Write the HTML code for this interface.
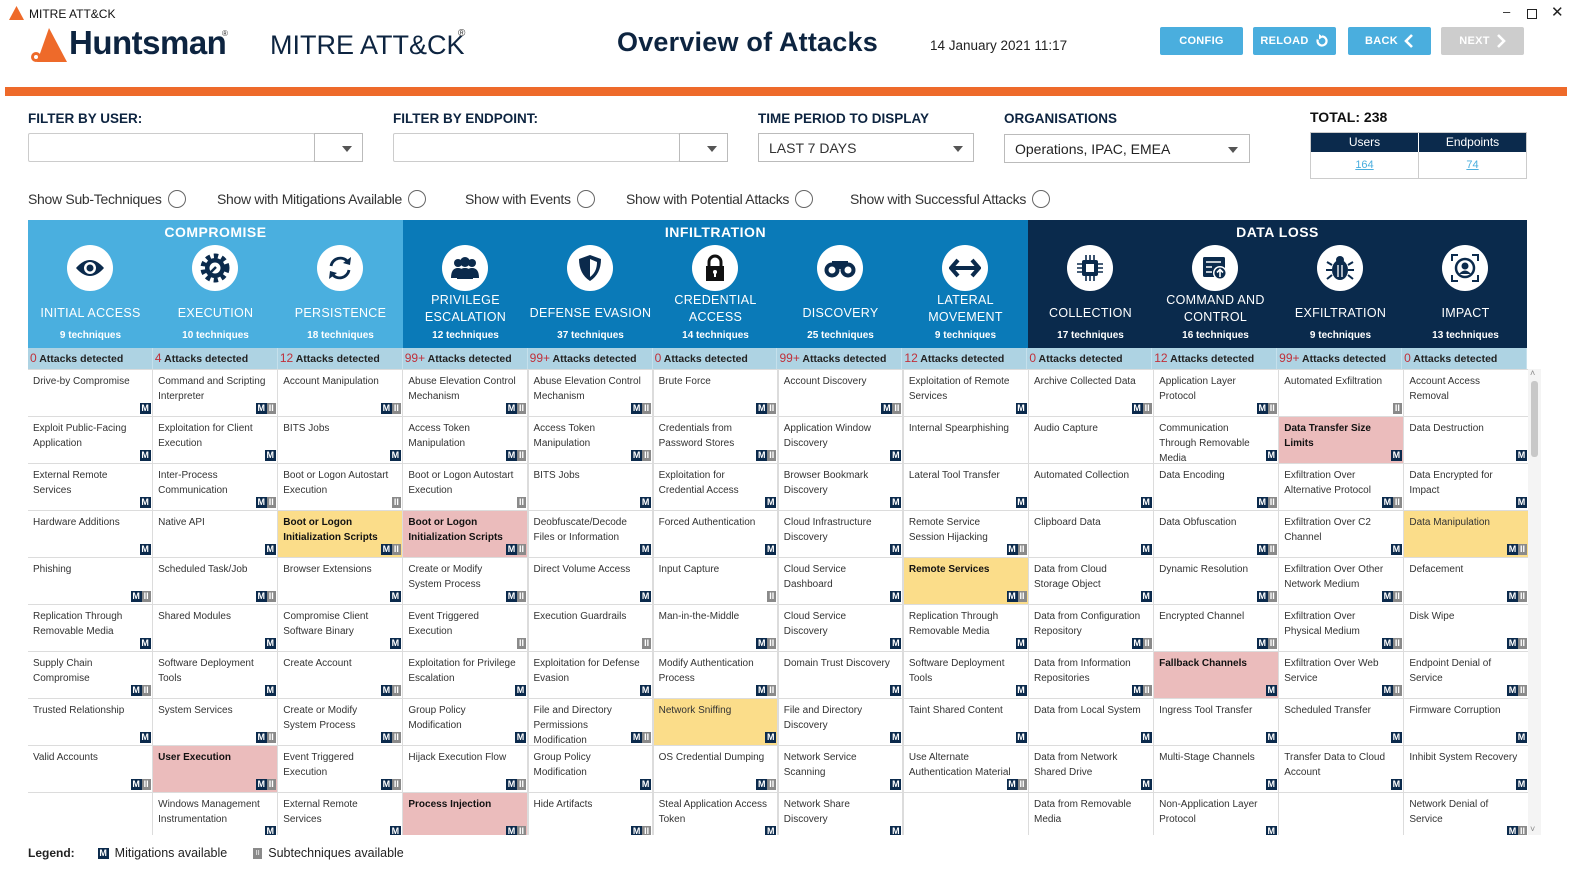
<!DOCTYPE html>
<html><head><meta charset="utf-8"><style>
*{box-sizing:border-box;margin:0;padding:0}
body{width:1590px;height:889px;background:#fff;font-family:"Liberation Sans",sans-serif;position:relative;overflow:hidden;color:#222}
.a{position:absolute}
.btn{position:absolute;top:27px;height:28px;width:83px;background:#4aaede;color:#fff;font-weight:bold;font-size:11px;border-radius:2px;display:flex;align-items:center;justify-content:center;gap:6px;letter-spacing:.3px}
.lbl{position:absolute;top:111px;font-weight:bold;font-size:13.5px;color:#0d2440}
.inp{position:absolute;top:133px;height:29px;border:1px solid #ccc;border-radius:2px}
.dd{position:absolute;top:133px;height:29px;border:1px solid #bbb}
.tri{position:absolute;width:0;height:0;border-left:5px solid transparent;border-right:5px solid transparent;border-top:6px solid #555}
.chk{position:absolute;top:190px;font-size:14px;color:#333;display:flex;align-items:center;gap:6px;letter-spacing:-.3px}
.chk i{display:inline-block;width:18px;height:18px;border:1.5px solid #666;border-radius:50%}
.grp{position:absolute;top:220px;height:128px;color:#fff;text-align:center}
.gt{position:absolute;top:4px;left:0;right:0;font-weight:bold;font-size:14px;letter-spacing:.5px}
.col{position:absolute;top:0;height:128px;width:125px}
.ic{position:absolute;left:39px;top:25px;width:46px;height:46px;border-radius:50%;background:#fff;display:flex;align-items:center;justify-content:center}
.nm{position:absolute;left:0;right:0;top:85px;font-size:12.5px;line-height:17px;letter-spacing:.3px}
.nm2{top:72px}
.tq{position:absolute;left:0;right:0;top:110px;font-size:10px;font-weight:bold}
.att{position:absolute;top:348px;left:28px;width:1499px;height:21px;background:#aed3e3;display:grid;grid-template-columns:repeat(12,1fr)}
.att div{font-size:10.5px;font-weight:bold;padding:3px 0 0 2px;border-right:1px solid #c5e0ec;white-space:nowrap}
.att span{color:#c0303a;font-weight:normal;font-size:12px}
.grid{position:absolute;top:369px;left:28px;width:1500px;height:466px;overflow:hidden;background:#dcdcdc;display:grid;grid-template-columns:repeat(12,1fr);grid-template-rows:repeat(10,45.5px);grid-auto-flow:column;gap:1.5px;padding-top:1px}
.c{background:#fff;position:relative;font-size:10px;line-height:15px;color:#333;padding:4px 10px 0 5px}
.y{background:#fbdd8a}.p{background:#ebbcbc}.b{font-weight:bold;color:#111}
.c u{position:absolute;right:1px;bottom:2px;display:flex;text-decoration:none}
.c u b,.lg b{display:inline-block;height:11px;font-size:9px;line-height:11px;color:#fff;text-align:center;font-weight:bold}
b.m{background:#0b2a4c;width:11px}b.s{background:#8a8a8a;width:9px;font-size:7px;font-weight:normal}
</style></head><body>
<svg class="a" style="left:9px;top:6px" width="15" height="14"><path d="M7.5 0 L15 14 L0 14Z" fill="#ee6a2a"/></svg>
<div class="a" style="left:29px;top:7px;font-size:12px;color:#111">MITRE ATT&amp;CK</div>
<div class="a" style="left:1503px;top:4px;font-size:13px;color:#222">&#8211;</div>
<div class="a" style="left:1527px;top:9px;width:10px;height:10px;border:1.5px solid #222"></div>
<div class="a" style="left:1551px;top:3px;font-size:15px;color:#222">&#10005;</div>
<svg class="a" style="left:31px;top:28px" width="36" height="34"><path d="M18 0 L36 34 L6 34Z" fill="#ee6a2a"/><circle cx="5" cy="29" r="5" fill="#ee6a2a"/><circle cx="5" cy="29" r="2" fill="#fff"/></svg>
<div class="a" style="left:69px;top:24px;font-size:33px;font-weight:bold;color:#0d2440;letter-spacing:-.5px">Huntsman</div>
<div class="a" style="left:222px;top:29px;font-size:8px;color:#333">®</div>
<div class="a" style="left:270px;top:30px;font-size:27px;color:#0d2440">MITRE ATT&amp;CK</div>
<div class="a" style="left:458px;top:28px;font-size:10px;color:#333">®</div>
<div class="a" style="left:617px;top:27px;font-size:27px;font-weight:bold;color:#0d2440;letter-spacing:.2px">Overview of Attacks</div>
<div class="a" style="left:930px;top:38px;font-size:13.5px;color:#222">14 January 2021 11:17</div>
<div class="btn" style="left:1160px">CONFIG</div>
<div class="btn" style="left:1253px">RELOAD <svg width="14" height="14" viewBox="0 0 14 14"><path d="M7 2.5A4.5 4.5 0 1 1 2.8 5.5" fill="none" stroke="#fff" stroke-width="2.2"/><path d="M4 0 L8 3 L4 5.5Z" fill="#fff"/></svg></div>
<div class="btn" style="left:1348px">BACK <svg width="10" height="14"><path d="M8 1 L2 7 L8 13" fill="none" stroke="#fff" stroke-width="2.6"/></svg></div>
<div class="btn" style="left:1441px;background:#cdcdcd">NEXT <svg width="10" height="14"><path d="M2 1 L8 7 L2 13" fill="none" stroke="#fff" stroke-width="2.6"/></svg></div>
<div class="a" style="left:5px;top:87px;width:1562px;height:9px;background:#ee6a2a"></div>
<div class="lbl" style="left:28px">FILTER BY USER:</div>
<div class="inp" style="left:28px;width:287px"></div><div class="dd" style="left:314px;width:49px"></div><div class="tri" style="left:342px;top:146px"></div>
<div class="lbl" style="left:393px">FILTER BY ENDPOINT:</div>
<div class="inp" style="left:393px;width:287px"></div><div class="dd" style="left:679px;width:49px"></div><div class="tri" style="left:707px;top:146px"></div>
<div class="lbl" style="left:758px">TIME PERIOD TO DISPLAY</div>
<div class="dd" style="left:758px;width:216px;font-size:14px;padding:6px 10px;color:#333">LAST 7 DAYS</div><div class="tri" style="left:953px;top:146px"></div>
<div class="lbl" style="left:1004px">ORGANISATIONS</div>
<div class="dd" style="left:1004px;top:134px;width:246px;font-size:14px;padding:6px 10px;color:#222">Operations, IPAC, EMEA</div><div class="tri" style="left:1228px;top:147px"></div>
<div class="a" style="left:1310px;top:109px;font-weight:bold;font-size:14px;color:#111">TOTAL: 238</div>
<div class="a" style="left:1310px;top:132px;width:217px;height:47px;border:1px solid #ccc">
<div style="display:flex;height:19px;background:#0b2a4c;color:#fff;font-size:12px"><div style="flex:1;text-align:center;line-height:19px;border-right:1px solid #fff">Users</div><div style="flex:1;text-align:center;line-height:19px">Endpoints</div></div>
<div style="display:flex;height:26px;color:#4aaede;font-size:11px;text-decoration:underline"><div style="flex:1;text-align:center;line-height:26px;border-right:1px solid #ccc">164</div><div style="flex:1;text-align:center;line-height:26px">74</div></div></div>
<div class="chk" style="left:28px">Show Sub-Techniques <i></i></div>
<div class="chk" style="left:217px">Show with Mitigations Available <i></i></div>
<div class="chk" style="left:465px">Show with Events <i></i></div>
<div class="chk" style="left:626px">Show with Potential Attacks <i></i></div>
<div class="chk" style="left:850px">Show with Successful Attacks <i></i></div>
<div class="grp" style="left:28px;width:375px;background:#4aafdf"><div class="gt">COMPROMISE</div>
<div class="col" style="left:0"><div class="ic"><svg width="30" height="20" viewBox="0 0 30 20"><path d="M1 10Q15 -6 29 10Q15 26 1 10Z" fill="#0b2a4c"/><circle cx="15" cy="10" r="6" fill="#fff"/><circle cx="15" cy="10" r="3.5" fill="#0b2a4c"/></svg></div><div class="nm">INITIAL ACCESS</div><div class="tq">9 techniques</div></div>
<div class="col" style="left:125px"><div class="ic"><svg width="32" height="32" viewBox="0 0 32 32"><circle cx="16" cy="16" r="11" fill="none" stroke="#0b2a4c" stroke-width="7" stroke-dasharray="4 3.2"/><circle cx="16" cy="16" r="10" fill="#0b2a4c"/><circle cx="16" cy="16" r="5.5" fill="#fff"/><path d="M12 20L17 15" stroke="#0b2a4c" stroke-width="2.5"/></svg></div><div class="nm">EXECUTION</div><div class="tq">10 techniques</div></div>
<div class="col" style="left:250px"><div class="ic"><svg width="30" height="30" viewBox="0 0 30 30"><path d="M6 13A9.5 9.5 0 0 1 23 9M24 17A9.5 9.5 0 0 1 7 21" fill="none" stroke="#0b2a4c" stroke-width="2.8"/><path d="M26 4L25 12L18 10Z M4 26L5 18L12 20Z" fill="#0b2a4c"/></svg></div><div class="nm">PERSISTENCE</div><div class="tq">18 techniques</div></div>
</div>
<div class="grp" style="left:403px;width:625px;background:#0a7ab8"><div class="gt">INFILTRATION</div>
<div class="col" style="left:0"><div class="ic"><svg width="30" height="24" viewBox="0 0 30 24"><circle cx="8" cy="7" r="4" fill="#0b2a4c"/><circle cx="22" cy="7" r="4" fill="#0b2a4c"/><circle cx="15" cy="6" r="5" fill="#0b2a4c"/><path d="M1 22Q1 12 8 12Q15 12 15 22ZM15 22Q15 12 22 12Q29 12 29 22ZM7 23Q7 12 15 12Q23 12 23 23Z" fill="#0b2a4c"/></svg></div><div class="nm nm2">PRIVILEGE<br>ESCALATION</div><div class="tq">12 techniques</div></div>
<div class="col" style="left:125px"><div class="ic"><svg width="24" height="28" viewBox="0 0 24 28"><path d="M12 1L23 5Q23 20 12 27Q1 20 1 5Z" fill="#0b2a4c"/><path d="M12 5L19 8Q19 18 12 23Z" fill="#fff"/></svg></div><div class="nm">DEFENSE EVASION</div><div class="tq">37 techniques</div></div>
<div class="col" style="left:250px"><div class="ic"><svg width="22" height="28" viewBox="0 0 22 28"><path d="M5 12V8A6 6 0 0 1 17 8V12" fill="none" stroke="#111" stroke-width="3"/><rect x="2" y="12" width="18" height="15" fill="#111"/><circle cx="11" cy="18" r="2" fill="#fff"/><rect x="10" y="18" width="2" height="5" fill="#fff"/></svg></div><div class="nm nm2">CREDENTIAL<br>ACCESS</div><div class="tq">14 techniques</div></div>
<div class="col" style="left:375px"><div class="ic"><svg width="32" height="20" viewBox="0 0 32 20"><circle cx="8" cy="12" r="7.5" fill="#0b2a4c"/><circle cx="24" cy="12" r="7.5" fill="#0b2a4c"/><rect x="8" y="3" width="16" height="8" fill="#0b2a4c"/><circle cx="8" cy="12" r="3.5" fill="#fff"/><circle cx="24" cy="12" r="3.5" fill="#fff"/></svg></div><div class="nm">DISCOVERY</div><div class="tq">25 techniques</div></div>
<div class="col" style="left:500px"><div class="ic"><svg width="32" height="20" viewBox="0 0 32 20"><path d="M9 2L2 10L9 18M23 2L30 10L23 18M3 10H29" fill="none" stroke="#0b2a4c" stroke-width="4"/></svg></div><div class="nm nm2">LATERAL<br>MOVEMENT</div><div class="tq">9 techniques</div></div>
</div>
<div class="grp" style="left:1028px;width:499px;background:#0a2a4c"><div class="gt">DATA LOSS</div>
<div class="col" style="left:0"><div class="ic"><svg width="30" height="30" viewBox="0 0 30 30"><rect x="7" y="7" width="16" height="16" rx="2" fill="#0b2a4c"/><rect x="11" y="11" width="8" height="8" fill="#fff"/><path d="M11 2V7M15 2V7M19 2V7M11 23V28M15 23V28M19 23V28M2 11H7M2 15H7M2 19H7M23 11H28M23 15H28M23 19H28" stroke="#0b2a4c" stroke-width="1.6"/></svg></div><div class="nm">COLLECTION</div><div class="tq">17 techniques</div></div>
<div class="col" style="left:125px"><div class="ic"><svg width="30" height="30" viewBox="0 0 30 30"><rect x="3" y="4" width="22" height="20" rx="1.5" fill="#0b2a4c"/><path d="M6 9H21M6 14H12M6 19H12" stroke="#fff" stroke-width="1.6"/><circle cx="20" cy="20" r="7" fill="#fff"/><circle cx="20" cy="20" r="5.5" fill="#0b2a4c"/><path d="M20 24V17M17 19.5L20 16.5L23 19.5" stroke="#fff" stroke-width="1.6" fill="none"/></svg></div><div class="nm nm2">COMMAND AND<br>CONTROL</div><div class="tq">16 techniques</div></div>
<div class="col" style="left:250px"><div class="ic"><svg width="30" height="30" viewBox="0 0 30 30"><ellipse cx="15" cy="17" rx="8" ry="10" fill="#0b2a4c"/><circle cx="15" cy="7" r="4" fill="#0b2a4c"/><path d="M7 12L2 9M7 17H1M7 22L2 26M23 12L28 9M23 17H29M23 22L28 26" stroke="#0b2a4c" stroke-width="2"/><path d="M13 12V24M17 12V24" stroke="#fff" stroke-width="1.3"/></svg></div><div class="nm">EXFILTRATION</div><div class="tq">9 techniques</div></div>
<div class="col" style="left:375px"><div class="ic"><svg width="32" height="32" viewBox="0 0 32 32"><circle cx="16" cy="16" r="9" fill="none" stroke="#0b2a4c" stroke-width="2.5"/><circle cx="16" cy="14" r="3.5" fill="#0b2a4c"/><path d="M10 22Q16 15 22 22" fill="#0b2a4c"/><path d="M3 9V3H9M23 3H29V9M3 23V29H9M23 29H29V23" fill="none" stroke="#0b2a4c" stroke-width="2"/></svg></div><div class="nm">IMPACT</div><div class="tq">13 techniques</div></div>
</div>
<div class="att">
<div><span>0</span> Attacks detected</div><div><span>4</span> Attacks detected</div><div><span>12</span> Attacks detected</div><div><span>99+</span> Attacks detected</div><div><span>99+</span> Attacks detected</div><div><span>0</span> Attacks detected</div><div><span>99+</span> Attacks detected</div><div><span>12</span> Attacks detected</div><div><span>0</span> Attacks detected</div><div><span>12</span> Attacks detected</div><div><span>99+</span> Attacks detected</div><div><span>0</span> Attacks detected</div>
</div>
<div class="grid">
<div class="c">Drive-by Compromise<u><b class="m">M</b></u></div>
<div class="c">Exploit Public-Facing Application<u><b class="m">M</b></u></div>
<div class="c">External Remote Services<u><b class="m">M</b></u></div>
<div class="c">Hardware Additions<u><b class="m">M</b></u></div>
<div class="c">Phishing<u><b class="m">M</b><b class="s">II</b></u></div>
<div class="c">Replication Through Removable Media<u><b class="m">M</b></u></div>
<div class="c">Supply Chain Compromise<u><b class="m">M</b><b class="s">II</b></u></div>
<div class="c">Trusted Relationship<u><b class="m">M</b></u></div>
<div class="c">Valid Accounts<u><b class="m">M</b><b class="s">II</b></u></div>
<div class="c"></div>

<div class="c">Command and Scripting Interpreter<u><b class="m">M</b><b class="s">II</b></u></div>
<div class="c">Exploitation for Client Execution<u><b class="m">M</b></u></div>
<div class="c">Inter-Process Communication<u><b class="m">M</b><b class="s">II</b></u></div>
<div class="c">Native API<u><b class="m">M</b></u></div>
<div class="c">Scheduled Task/Job<u><b class="m">M</b><b class="s">II</b></u></div>
<div class="c">Shared Modules<u><b class="m">M</b></u></div>
<div class="c">Software Deployment Tools<u><b class="m">M</b></u></div>
<div class="c">System Services<u><b class="m">M</b><b class="s">II</b></u></div>
<div class="c p b">User Execution<u><b class="m">M</b><b class="s">II</b></u></div>
<div class="c">Windows Management Instrumentation<u><b class="m">M</b></u></div>

<div class="c">Account Manipulation<u><b class="m">M</b><b class="s">II</b></u></div>
<div class="c">BITS Jobs<u><b class="m">M</b></u></div>
<div class="c">Boot or Logon Autostart Execution<u><b class="s">II</b></u></div>
<div class="c y b">Boot or Logon Initialization Scripts<u><b class="m">M</b><b class="s">II</b></u></div>
<div class="c">Browser Extensions<u><b class="m">M</b></u></div>
<div class="c">Compromise Client Software Binary<u><b class="m">M</b></u></div>
<div class="c">Create Account<u><b class="m">M</b><b class="s">II</b></u></div>
<div class="c">Create or Modify System Process<u><b class="m">M</b><b class="s">II</b></u></div>
<div class="c">Event Triggered Execution<u><b class="m">M</b><b class="s">II</b></u></div>
<div class="c">External Remote Services<u><b class="m">M</b></u></div>

<div class="c">Abuse Elevation Control Mechanism<u><b class="m">M</b><b class="s">II</b></u></div>
<div class="c">Access Token Manipulation<u><b class="m">M</b><b class="s">II</b></u></div>
<div class="c">Boot or Logon Autostart Execution<u><b class="s">II</b></u></div>
<div class="c p b">Boot or Logon Initialization Scripts<u><b class="m">M</b><b class="s">II</b></u></div>
<div class="c">Create or Modify System Process<u><b class="m">M</b><b class="s">II</b></u></div>
<div class="c">Event Triggered Execution<u><b class="s">II</b></u></div>
<div class="c">Exploitation for Privilege Escalation<u><b class="m">M</b></u></div>
<div class="c">Group Policy Modification<u><b class="m">M</b></u></div>
<div class="c">Hijack Execution Flow<u><b class="m">M</b><b class="s">II</b></u></div>
<div class="c p b">Process Injection<u><b class="m">M</b><b class="s">II</b></u></div>

<div class="c">Abuse Elevation Control Mechanism<u><b class="m">M</b><b class="s">II</b></u></div>
<div class="c">Access Token Manipulation<u><b class="m">M</b><b class="s">II</b></u></div>
<div class="c">BITS Jobs<u><b class="m">M</b></u></div>
<div class="c">Deobfuscate/Decode Files or Information<u><b class="m">M</b></u></div>
<div class="c">Direct Volume Access<u><b class="m">M</b></u></div>
<div class="c">Execution Guardrails<u><b class="s">II</b></u></div>
<div class="c">Exploitation for Defense Evasion<u><b class="m">M</b></u></div>
<div class="c">File and Directory Permissions Modification<u><b class="m">M</b><b class="s">II</b></u></div>
<div class="c">Group Policy Modification<u><b class="m">M</b></u></div>
<div class="c">Hide Artifacts<u><b class="m">M</b><b class="s">II</b></u></div>

<div class="c">Brute Force<u><b class="m">M</b><b class="s">II</b></u></div>
<div class="c">Credentials from Password Stores<u><b class="m">M</b><b class="s">II</b></u></div>
<div class="c">Exploitation for Credential Access<u><b class="m">M</b></u></div>
<div class="c">Forced Authentication<u><b class="m">M</b></u></div>
<div class="c">Input Capture<u><b class="s">II</b></u></div>
<div class="c">Man-in-the-Middle<u><b class="m">M</b><b class="s">II</b></u></div>
<div class="c">Modify Authentication Process<u><b class="m">M</b><b class="s">II</b></u></div>
<div class="c y">Network Sniffing<u><b class="m">M</b></u></div>
<div class="c">OS Credential Dumping<u><b class="m">M</b><b class="s">II</b></u></div>
<div class="c">Steal Application Access Token<u><b class="m">M</b></u></div>

<div class="c">Account Discovery<u><b class="m">M</b><b class="s">II</b></u></div>
<div class="c">Application Window Discovery<u><b class="m">M</b></u></div>
<div class="c">Browser Bookmark Discovery<u><b class="m">M</b></u></div>
<div class="c">Cloud Infrastructure Discovery<u><b class="m">M</b></u></div>
<div class="c">Cloud Service Dashboard<u><b class="m">M</b></u></div>
<div class="c">Cloud Service Discovery<u><b class="m">M</b></u></div>
<div class="c">Domain Trust Discovery<u><b class="m">M</b></u></div>
<div class="c">File and Directory Discovery<u><b class="m">M</b></u></div>
<div class="c">Network Service Scanning<u><b class="m">M</b></u></div>
<div class="c">Network Share Discovery<u><b class="m">M</b></u></div>

<div class="c">Exploitation of Remote Services<u><b class="m">M</b></u></div>
<div class="c">Internal Spearphishing</div>
<div class="c">Lateral Tool Transfer<u><b class="m">M</b></u></div>
<div class="c">Remote Service Session Hijacking<u><b class="m">M</b><b class="s">II</b></u></div>
<div class="c y b">Remote Services<u><b class="m">M</b><b class="s">II</b></u></div>
<div class="c">Replication Through Removable Media<u><b class="m">M</b></u></div>
<div class="c">Software Deployment Tools<u><b class="m">M</b></u></div>
<div class="c">Taint Shared Content<u><b class="m">M</b></u></div>
<div class="c">Use Alternate Authentication Material<u><b class="m">M</b><b class="s">II</b></u></div>
<div class="c"></div>

<div class="c">Archive Collected Data<u><b class="m">M</b><b class="s">II</b></u></div>
<div class="c">Audio Capture</div>
<div class="c">Automated Collection<u><b class="m">M</b></u></div>
<div class="c">Clipboard Data<u><b class="m">M</b></u></div>
<div class="c">Data from Cloud Storage Object<u><b class="m">M</b></u></div>
<div class="c">Data from Configuration Repository<u><b class="m">M</b><b class="s">II</b></u></div>
<div class="c">Data from Information Repositories<u><b class="m">M</b><b class="s">II</b></u></div>
<div class="c">Data from Local System<u><b class="m">M</b></u></div>
<div class="c">Data from Network Shared Drive<u><b class="m">M</b></u></div>
<div class="c">Data from Removable Media</div>

<div class="c">Application Layer Protocol<u><b class="m">M</b><b class="s">II</b></u></div>
<div class="c">Communication Through Removable Media<u><b class="m">M</b></u></div>
<div class="c">Data Encoding<u><b class="m">M</b><b class="s">II</b></u></div>
<div class="c">Data Obfuscation<u><b class="m">M</b><b class="s">II</b></u></div>
<div class="c">Dynamic Resolution<u><b class="m">M</b><b class="s">II</b></u></div>
<div class="c">Encrypted Channel<u><b class="m">M</b><b class="s">II</b></u></div>
<div class="c p b">Fallback Channels<u><b class="m">M</b></u></div>
<div class="c">Ingress Tool Transfer<u><b class="m">M</b></u></div>
<div class="c">Multi-Stage Channels<u><b class="m">M</b></u></div>
<div class="c">Non-Application Layer Protocol<u><b class="m">M</b></u></div>

<div class="c">Automated Exfiltration<u><b class="s">II</b></u></div>
<div class="c p b">Data Transfer Size Limits<u><b class="m">M</b></u></div>
<div class="c">Exfiltration Over Alternative Protocol<u><b class="m">M</b><b class="s">II</b></u></div>
<div class="c">Exfiltration Over C2 Channel<u><b class="m">M</b></u></div>
<div class="c">Exfiltration Over Other Network Medium<u><b class="m">M</b><b class="s">II</b></u></div>
<div class="c">Exfiltration Over Physical Medium<u><b class="m">M</b><b class="s">II</b></u></div>
<div class="c">Exfiltration Over Web Service<u><b class="m">M</b><b class="s">II</b></u></div>
<div class="c">Scheduled Transfer<u><b class="m">M</b></u></div>
<div class="c">Transfer Data to Cloud Account<u><b class="m">M</b></u></div>
<div class="c"></div>

<div class="c">Account Access Removal</div>
<div class="c">Data Destruction<u><b class="m">M</b></u></div>
<div class="c">Data Encrypted for Impact<u><b class="m">M</b></u></div>
<div class="c y">Data Manipulation<u><b class="m">M</b><b class="s">II</b></u></div>
<div class="c">Defacement<u><b class="m">M</b><b class="s">II</b></u></div>
<div class="c">Disk Wipe<u><b class="m">M</b><b class="s">II</b></u></div>
<div class="c">Endpoint Denial of Service<u><b class="m">M</b><b class="s">II</b></u></div>
<div class="c">Firmware Corruption<u><b class="m">M</b></u></div>
<div class="c">Inhibit System Recovery<u><b class="m">M</b></u></div>
<div class="c">Network Denial of Service<u><b class="m">M</b><b class="s">II</b></u></div>
</div>
<div class="a" style="left:1528px;top:369px;width:13px;height:466px;background:#f4f4f4"></div>
<div class="a" style="left:1531px;top:381px;width:7px;height:76px;background:#c8c8c8;border-radius:3px"></div>
<div class="a" style="left:1530px;top:368px;font-size:9px;color:#888">&#708;</div>
<div class="a" style="left:1530px;top:824px;font-size:9px;color:#888">&#709;</div>
<div class="a lg" style="left:28px;top:846px;font-size:12.5px;color:#222;display:flex;align-items:center"><span style="font-weight:bold;font-size:12px;margin-right:23px">Legend:</span><b class="m" style="margin-right:6px">M</b>Mitigations available<b class="s" style="margin:0 6px 0 26px">II</b>Subtechniques available</div>
</body></html>
